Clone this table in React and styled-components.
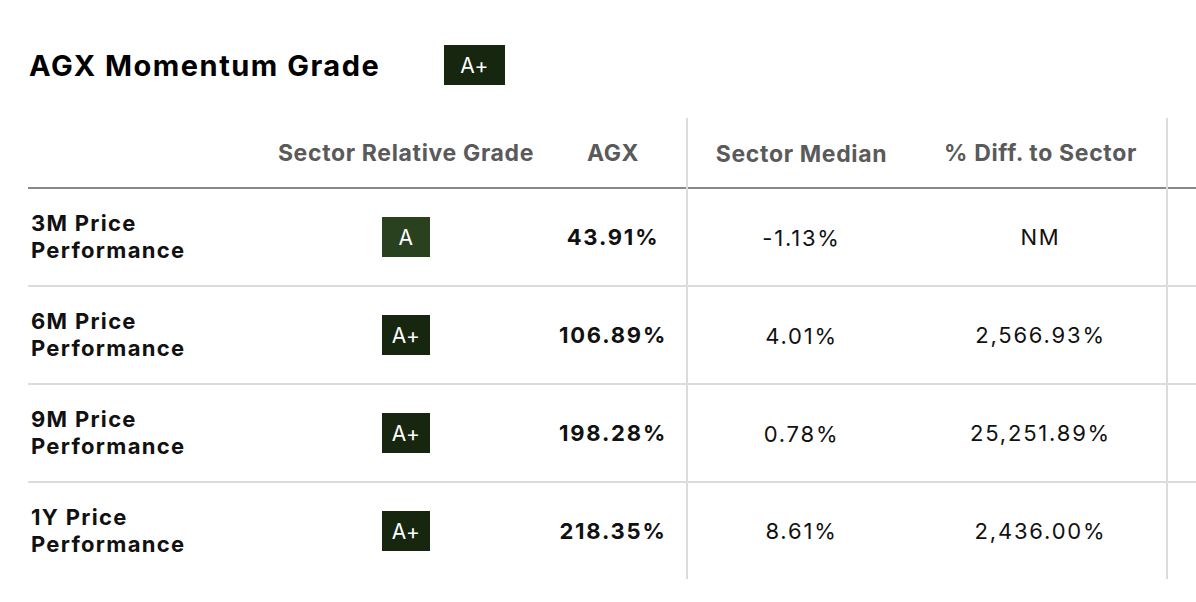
import React from "react";
import styled, { createGlobalStyle } from "styled-components";

const GlobalStyle = createGlobalStyle`
  html, body { margin: 0; padding: 0; background: #fff; }
  body { font-family: Inter, Roboto, "Liberation Sans", Arial, sans-serif; color: #111; }
`;

const Page = styled.div`
  padding: 45px 0 0 28px;
  width: 1168px;
`;

const TitleRow = styled.div`
  display: flex;
  align-items: center;
  height: 40px;
  margin-bottom: 33px;
`;

const Title = styled.h2`
  margin: 0 0 0 1px;
  width: 415px;
  font-weight: 700;
  font-size: 29px;
  letter-spacing: 1.5px;
  color: #000;
  white-space: nowrap;
`;

const COLS = "244px 268px 146px 229px 251px 1fr";

const Row = styled.div`
  display: grid;
  grid-template-columns: ${COLS};
  height: ${(p) => p.$height}px;
  border-bottom: ${(p) => (p.$last ? "none" : `2px solid ${p.$lineColor}`)};
`;

const Cell = styled.div`
  display: flex;
  align-items: center;
  justify-content: ${(p) => p.$justify || "center"};
  border-left: ${(p) => (p.$divider ? "2px solid #dcdcdc" : "none")};
  margin-bottom: ${(p) => (p.$divider && !p.$last ? "-2px" : "0")};
  position: relative;
  z-index: 1;
`;

const HeadText = styled.span`
  font-size: 23px;
  font-weight: 700;
  letter-spacing: 0.65px;
  color: #5a5a5a;
  white-space: nowrap;
`;

const Label = styled.span`
  font-size: 22px;
  font-weight: 700;
  line-height: 27px;
  letter-spacing: 1.3px;
  color: #111;
  padding-left: 3px;
  width: 220px;
`;

const Value = styled.span`
  font-size: 22px;
  font-weight: ${(p) => (p.$bold ? 700 : 400)};
  letter-spacing: 1.8px;
  color: #111;
  white-space: nowrap;
`;

const Grade = styled.span`
  display: inline-flex;
  align-items: center;
  justify-content: center;
  width: ${(p) => p.$w}px;
  height: 40px;
  background: ${(p) => (p.$grade === "A" ? "#2a4120" : "#16260f")};
  color: #fff;
  font-size: 21px;
  font-weight: 400;
  letter-spacing: 0.5px;
`;

const rows = [
  { label: ["3M Price", "Performance"], grade: "A", agx: "43.91%", median: "-1.13%", diff: "NM" },
  { label: ["6M Price", "Performance"], grade: "A+", agx: "106.89%", median: "4.01%", diff: "2,566.93%" },
  { label: ["9M Price", "Performance"], grade: "A+", agx: "198.28%", median: "0.78%", diff: "25,251.89%" },
  { label: ["1Y Price", "Performance"], grade: "A+", agx: "218.35%", median: "8.61%", diff: "2,436.00%" },
];

export default function App() {
  return (
    <>
      <GlobalStyle />
      <Page>
        <TitleRow>
          <Title>AGX Momentum Grade</Title>
          <Grade $grade="A+" $w={61}>A+</Grade>
        </TitleRow>
        <Row $height={69} $lineColor="#888888">
          <Cell />
          <Cell><HeadText>Sector Relative Grade</HeadText></Cell>
          <Cell><HeadText>AGX</HeadText></Cell>
          <Cell $divider><HeadText>Sector Median</HeadText></Cell>
          <Cell><HeadText>% Diff. to Sector</HeadText></Cell>
          <Cell $divider />
        </Row>
        {rows.map((r, i) => {
          const last = i === rows.length - 1;
          return (
            <Row key={i} $height={96} $lineColor="#dcdcdc" $last={last}>
              <Cell $justify="flex-start">
                <Label>{r.label[0]}<br />{r.label[1]}</Label>
              </Cell>
              <Cell><Grade $grade={r.grade} $w={48}>{r.grade}</Grade></Cell>
              <Cell><Value $bold>{r.agx}</Value></Cell>
              <Cell $divider $last={last}><Value>{r.median}</Value></Cell>
              <Cell><Value>{r.diff}</Value></Cell>
              <Cell $divider $last={last} />
            </Row>
          );
        })}
      </Page>
    </>
  );
}
